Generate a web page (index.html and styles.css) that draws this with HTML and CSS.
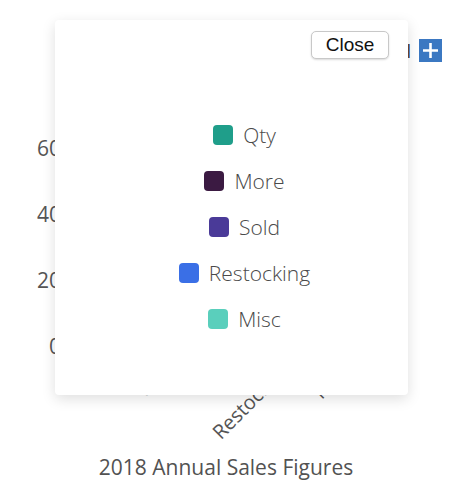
FILE: index.html
```html
<!DOCTYPE html>
<html>
<head>
<meta charset="utf-8">
<link rel="stylesheet" href="styles.css">
</head>
<body>
<div class="chart">
  <div class="toolbar">
    <span class="tool-text">l</span>
    <span class="plus" aria-label="Add">
      <svg width="23" height="23" viewBox="0 0 23 23"><rect width="23" height="23" fill="#3b78c2"/><path d="M11.5 4v15M4 11.5h15" stroke="#fff" stroke-width="2.6"/></svg>
    </span>
  </div>
  <div class="plot">
    <div class="yaxis">
      <span>60</span>
      <span>40</span>
      <span>20</span>
      <span>0</span>
    </div>
    <div class="xaxis">
      <span class="xl xl1">Qty</span>
      <span class="xl xl2">Restocking</span>
      <span class="xl xl3">Misc</span>
    </div>
  </div>
  <div class="title">2018 Annual Sales Figures</div>
</div>

<div class="modal">
  <div class="modal-head">
    <button class="close">Close</button>
  </div>
  <ul class="legend">
    <li><i class="sw qty"></i>Qty</li>
    <li><i class="sw more"></i>More</li>
    <li><i class="sw sold"></i>Sold</li>
    <li><i class="sw rest"></i>Restocking</li>
    <li><i class="sw misc"></i>Misc</li>
  </ul>
</div>
</body>
</html>
```
FILE: styles.css
```css
html, body {
  margin: 0;
  padding: 0;
  background: #fff;
}
body {
  width: 474px;
  height: 500px;
  position: relative;
  overflow: hidden;
  font-family: "Open Sans", "Noto Sans", sans-serif;
  color: #525252;
}
.chart {
  display: flex;
  flex-direction: column;
}
.toolbar {
  display: flex;
  justify-content: flex-end;
  align-items: flex-end;
  gap: 8px;
  padding: 39px 32px 0 0;
  height: 23px;
}
.tool-text {
  font-size: 18px;
  line-height: 18px;
  color: #333;
  margin-bottom: 2px;
}
.plus svg { display: block; }
.plot {
  position: relative;
  height: 392px;
}
.yaxis {
  display: flex;
  flex-direction: column;
  align-items: flex-end;
  width: 61px;
  gap: 40px;
  padding-top: 73px;
  font-size: 21px;
  line-height: 26px;
  color: #555;
}
.xaxis .xl {
  position: absolute;
  font-size: 20px;
  line-height: 24px;
  white-space: nowrap;
  transform-origin: 100% 0;
  transform: rotate(-45deg);
  color: #555;
}
.xl1 { right: 318px; top: 300px; }
.xl2 { right: 195px; top: 294px; }
.xl3 { right: 136px; top: 295px; }
.title {
  text-align: center;
  font-size: 21px;
  line-height: 26px;
  padding-right: 22px;
  color: #525252;
}
.modal {
  position: absolute;
  left: 55px;
  top: 20px;
  width: 353px;
  height: 375px;
  background: #fff;
  border-radius: 4px;
  box-shadow: 0 4px 14px rgba(0,0,0,0.13);
  box-sizing: border-box;
}
.modal-head {
  display: flex;
  justify-content: flex-end;
  padding: 11px 19px 0 0;
}
.close {
  width: 78px;
  height: 28px;
  background: #fff;
  border: 1px solid #c8c8c8;
  border-radius: 5px;
  box-shadow: 0 1px 2px rgba(0,0,0,0.15);
  font-family: "Liberation Sans", Arial, sans-serif;
  font-size: 19px;
  color: #111;
  padding: 0;
}
.legend {
  list-style: none;
  margin: 0;
  padding: 63px 0 0 26px;
  display: flex;
  flex-direction: column;
  align-items: center;
  gap: 20px;
}
.legend li {
  display: flex;
  align-items: center;
  gap: 10px;
  height: 26px;
  font-size: 21px;
  font-weight: 300;
  color: #4a4a4a;
}
.sw {
  display: block;
  width: 20px;
  height: 20px;
  border-radius: 4px;
}
.qty { background: #1f9e8a; }
.more { background: #3b1a42; }
.sold { background: #4a3a98; }
.rest { background: #3a6fe6; }
.misc { background: #5acfbc; }
```
